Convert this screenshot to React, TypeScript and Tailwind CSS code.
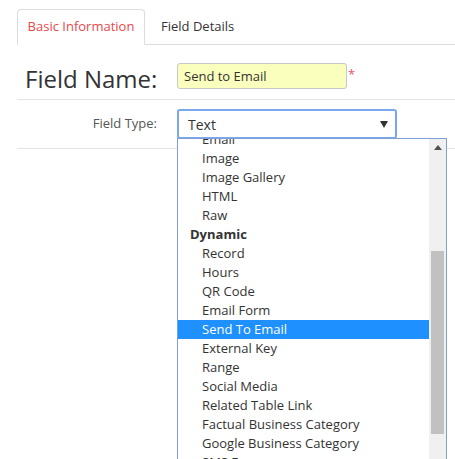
import React from 'react';

const options: { label: string; group?: boolean; selected?: boolean }[] = [
  { label: 'Email' },
  { label: 'Image' },
  { label: 'Image Gallery' },
  { label: 'HTML' },
  { label: 'Raw' },
  { label: 'Dynamic', group: true },
  { label: 'Record' },
  { label: 'Hours' },
  { label: 'QR Code' },
  { label: 'Email Form' },
  { label: 'Send To Email', selected: true },
  { label: 'External Key' },
  { label: 'Range' },
  { label: 'Social Media' },
  { label: 'Related Table Link' },
  { label: 'Factual Business Category' },
  { label: 'Google Business Category' },
  { label: 'SMS Form' },
  { label: 'Payment' },
];

const FieldTypeList: React.FC = () => (
  <div className="absolute left-[160px] top-[38px] z-10 flex h-[330px] w-[270px] border border-[#7f9fd8] bg-white">
    <div className="h-full w-[251px] overflow-hidden">
      <ul className="-mt-[9px]">
        {options.map((o) => (
          <li
            key={o.label}
            className={
              o.group
                ? 'h-[19px] pl-[12px] text-[13px] leading-[19px] font-bold text-[#333]'
                : o.selected
                ? 'h-[19px] bg-[#1e90ff] pl-[24px] text-[13px] leading-[19px] text-white'
                : 'h-[19px] pl-[24px] text-[13px] leading-[19px] text-[#333]'
            }
          >
            {o.label}
          </li>
        ))}
      </ul>
    </div>
    <div className="flex h-full w-[17px] flex-col bg-[#f0f0f0]">
      <div className="flex h-[17px] items-center justify-center">
        <svg width="8" height="5" viewBox="0 0 8 5">
          <path d="M0 5 L4 0 L8 5 Z" fill="#505050" />
        </svg>
      </div>
      <div className="mx-[2px] mt-[95px] h-[183px] bg-[#c1c1c1]" />
    </div>
  </div>
);

export default function App() {
  return (
    <div className="h-screen overflow-hidden bg-white pl-[17px] pt-[9px] font-['Open_Sans',sans-serif] text-[#333]">
      <ul className="flex h-[36px] border-b border-[#ddd]">
        <li className="-mb-px flex h-[36px] w-[128px] items-center justify-center rounded-t-[4px] border border-[#ddd] border-b-white bg-white text-[13px] text-[#e8474b]">
          Basic Information
        </li>
        <li className="flex h-[35px] items-center pl-[16px] text-[13px] text-[#333]">Field Details</li>
      </ul>

      <div className="flex h-[55px] items-start border-b border-[#e5e5e5]">
        <div className="w-[160px] pl-[8px] pt-[16px] text-[24px] leading-[35px] text-[#333]">Field Name:</div>
        <div className="flex items-start pt-[18px]">
          <input
            readOnly
            value="Send to Email"
            className="h-[26px] w-[170px] rounded-[3px] border border-[#c8c8c8] bg-[#fbffbe] pl-[6px] text-[13px] text-[#333] outline-none"
          />
          <span className="ml-[1px] mt-[5px] text-[13px] leading-[13px] text-[#f0506e]">*</span>
        </div>
      </div>

      <div className="relative flex h-[49px] items-start border-b border-[#e5e5e5]">
        <div className="w-[160px] pr-[20px] pt-[14px] text-right text-[13px] leading-[19px] text-[#555]">Field Type:</div>
        <div className="mt-[9px] flex h-[30px] w-[220px] items-center justify-between rounded-[3px] border-2 border-[#79a9ec] pl-[9px] pr-[7px]">
          <span className="text-[14px] text-[#333]">Text</span>
          <svg width="8" height="7" viewBox="0 0 8 7">
            <path d="M0 0 L8 0 L4 7 Z" fill="#333" />
          </svg>
        </div>
        <FieldTypeList />
      </div>
    </div>
  );
}
